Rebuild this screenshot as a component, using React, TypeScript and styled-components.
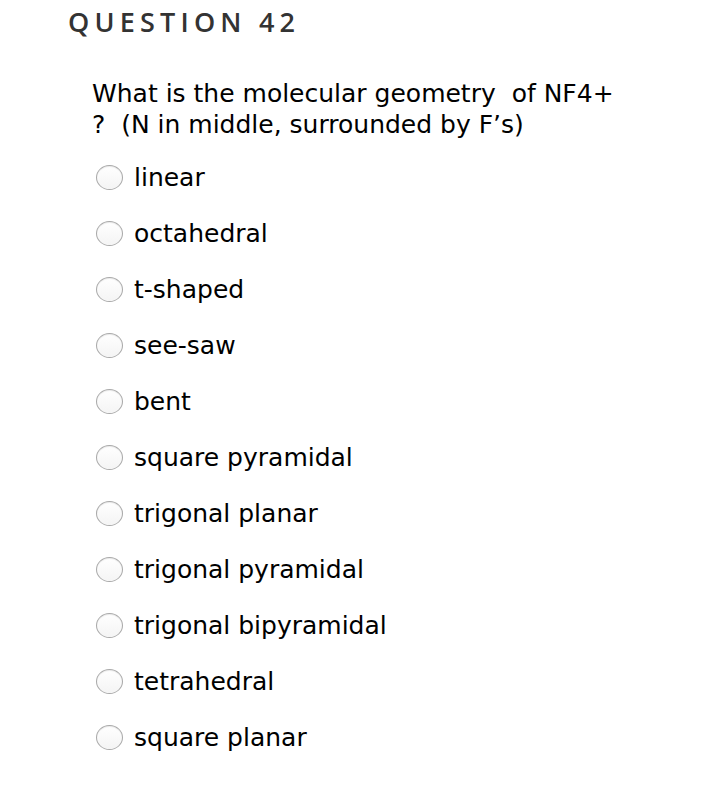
import React from "react";
import styled, { createGlobalStyle } from "styled-components";

const Global = createGlobalStyle`
  html, body { margin: 0; padding: 0; background: #fff; }
  body { font-family: "DejaVu Sans", sans-serif; }
`;

const Page = styled.div`
  width: 704px;
  height: 798px;
  box-sizing: border-box;
  padding: 7px 0 0 68px;
`;

const Heading = styled.h2`
  margin: 0;
  font-family: "Open Sans", sans-serif;
  font-weight: 600;
  font-size: 27px;
  letter-spacing: 5.2px;
  line-height: 30px;
  color: #333;
`;

const Question = styled.div`
  margin: 41px 0 0 24px;
  font-size: 25px;
  line-height: 31px;
  color: #000;
  width: 580px;
`;

const Options = styled.div`
  display: flex;
  flex-direction: column;
  margin: 9px 0 0 28px;
`;

const Option = styled.label`
  display: flex;
  align-items: center;
  gap: 11px;
  height: 56px;
  font-size: 25px;
  color: #000;
`;

const Radio = styled.span`
  width: 27px;
  height: 25px;
  box-sizing: border-box;
  border-radius: 50%;
  border: 1px solid #a9a9a9;
  background: linear-gradient(#fff, #f4f4f4);
  box-shadow: inset 0 1px 1px rgba(0,0,0,0.08);
  flex-shrink: 0;
`;

const options = [
  "linear",
  "octahedral",
  "t-shaped",
  "see-saw",
  "bent",
  "square pyramidal",
  "trigonal planar",
  "trigonal pyramidal",
  "trigonal bipyramidal",
  "tetrahedral",
  "square planar",
];

export default function App() {
  return (
    <Page>
      <Global />
      <Heading>QUESTION 42</Heading>
      <Question>
        What is the molecular geometry&nbsp; of NF4+
        <br />? &nbsp;(N in middle, surrounded by F’s)
      </Question>
      <Options>
        {options.map((o) => (
          <Option key={o}>
            <Radio />
            <span>{o}</span>
          </Option>
        ))}
      </Options>
    </Page>
  );
}
